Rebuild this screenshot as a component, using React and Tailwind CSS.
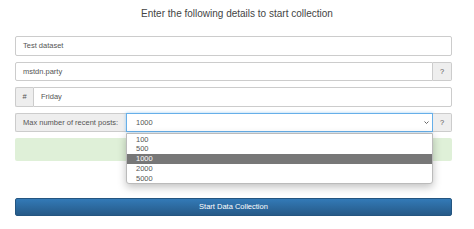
import React from "react";

const font = { fontFamily: '"Liberation Sans", Arial, sans-serif' };

function Addon({ children, className = "" }) {
  return (
    <div className={`flex items-center justify-center bg-[#eeeeee] border border-[#cccccc] text-[#555] text-[7.5px] ${className}`}>
      {children}
    </div>
  );
}

export default function App() {
  const options = ["100", "500", "1000", "2000", "5000"];

  return (
    <div className="w-[474px] h-[229px] bg-white overflow-hidden" style={font}>
      <h4 className="text-center text-[10px] leading-[12px] text-[#444] pt-[8px]">
        Enter the following details to start collection
      </h4>

      <div className="ml-[15px] w-[437px] mt-[16px] flex flex-col gap-[6px]">
        <div className="h-[19.5px] border border-[#cccccc] rounded-[2px] flex items-center px-[7px] text-[7.5px] text-[#555]">
          Test dataset
        </div>

        <div className="h-[19.5px] flex">
          <div className="flex-1 border border-[#cccccc] rounded-l-[2px] flex items-center px-[7px] text-[7.5px] text-[#555]">
            mstdn.party
          </div>
          <Addon className="w-[19px] border-l-0 rounded-r-[2px]">?</Addon>
        </div>

        <div className="h-[19.5px] flex">
          <Addon className="w-[18px] border-r-0 rounded-l-[2px]">#</Addon>
          <div className="flex-1 border border-[#cccccc] rounded-r-[2px] flex items-center px-[7px] text-[7.5px] text-[#555]">
            Friday
          </div>
        </div>

        <div className="h-[19.5px] flex relative">
          <Addon className="w-[111px] border-r-0 rounded-l-[2px] justify-start px-[7px]">
            Max number of recent posts:
          </Addon>
          <div className="flex-1 border border-[#66afe9] shadow-[0_0_3px_rgba(102,175,233,0.6)] flex items-center justify-between pl-[9px] pr-[3px] text-[7.5px] text-[#555]">
            <span>1000</span>
            <svg width="5" height="3" viewBox="0 0 5 3">
              <path d="M0.5 0.5 L2.5 2.5 L4.5 0.5" fill="none" stroke="#555" strokeWidth="0.9" />
            </svg>
          </div>
          <Addon className="w-[19px] border-l-0 rounded-r-[2px]">?</Addon>

          <div className="absolute left-[111px] top-[20px] w-[307px] bg-white border border-[#bbbbbb] rounded-b-[3px] shadow-[0_3px_8px_rgba(0,0,0,0.25)] pt-[1px] z-10">
            {options.map((o) => (
              <div
                key={o}
                className={`h-[9.8px] leading-[9.8px] px-[9px] text-[7.5px] ${
                  o === "1000" ? "bg-[#777777] text-white" : "text-[#555]"
                }`}
              >
                {o}
              </div>
            ))}
          </div>
        </div>

        <div className="h-[23px] bg-[#dff0d8] rounded-[2px]" />

        <button className="mt-[31px] h-[18px] rounded-[2px] border border-[#245580] bg-gradient-to-b from-[#337ab7] to-[#265a88] text-white text-[7.5px] flex items-center justify-center">
          Start Data Collection
        </button>
      </div>
    </div>
  );
}
